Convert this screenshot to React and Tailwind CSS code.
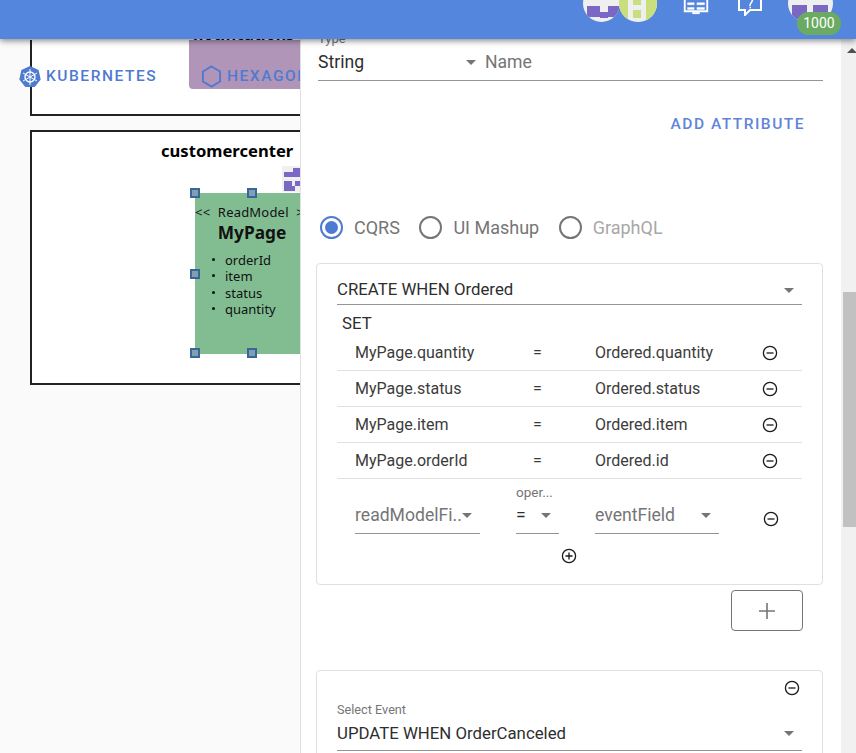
import React from 'react';

const font = { fontFamily: 'Roboto, sans-serif' };

function MinusCircle({ className = '' }) {
  return (
    <svg viewBox="0 0 16 16" className={`w-4 h-4 ${className}`} fill="none" stroke="#1a1a1a" strokeWidth="1.3">
      <circle cx="8" cy="8" r="6.6" />
      <path d="M4.5 8h7" />
    </svg>
  );
}

function Caret({ className = '' }) {
  return <span className={`shrink-0 w-0 h-0 border-x-[5px] border-x-transparent border-t-[5px] border-t-[#757575] ${className}`} />;
}

function Handle({ className }) {
  return <div className={`absolute w-[10px] h-[10px] bg-[#7f9fb5] border-2 border-[#3a6596] ${className}`} />;
}

function Radio({ on, label, muted }) {
  return (
    <div className="flex items-center gap-[11px] h-6">
      <span className={`w-[23px] h-[23px] rounded-full border-2 flex items-center justify-center ${on ? 'border-[#4f7ad2]' : 'border-[#757575]'}`}>
        {on && <span className="w-[13px] h-[13px] rounded-full bg-[#4f7ad2]" />}
      </span>
      <span className={`text-[18px] ${muted ? 'text-[#a8a8a8]' : 'text-[#757575]'}`}>{label}</span>
    </div>
  );
}

const rows = [
  ['MyPage.quantity', 'Ordered.quantity'],
  ['MyPage.status', 'Ordered.status'],
  ['MyPage.item', 'Ordered.item'],
  ['MyPage.orderId', 'Ordered.id'],
];

function MapRow({ left, right }) {
  return (
    <div className="h-9 flex items-center border-b border-[#e0e0e0] text-[#3c3c3c] text-base">
      <span className="w-[170px] pl-[18px]">{left}</span>
      <span className="w-[88px] pl-[26px]">=</span>
      <span className="w-[167px]">{right}</span>
      <MinusCircle />
    </div>
  );
}

function Canvas() {
  return (
    <div className="w-[300px] shrink-0 bg-[#fafafa] pt-[40px] overflow-hidden">
      <div className="ml-[30px] h-[76px] w-[290px] bg-white border-l-2 border-b-2 border-[#222] relative">
        <div className="absolute left-[157px] top-0 w-[133px] h-[49px] bg-[#b095b8] rounded-bl-sm">
          <div className="pl-1 font-bold text-base leading-none text-black -mt-[14px] whitespace-nowrap" style={{ fontFamily: '"Noto Sans", sans-serif' }}>notifications</div>
        </div>
        <div className="absolute left-[-14px] top-[25px] flex items-center gap-[4px]">
          <svg viewBox="0 0 24 24" className="w-6 h-6">
            <path d="M12 1l8.600 4.100 2.100 9.300-6 7.500H7.300l-6-7.500 2.100-9.300z" fill="#4f7ad2" />
            <circle cx="12" cy="12" r="5" fill="none" stroke="#fff" strokeWidth="1.4" />
            <path d="M12 4v16M5 8l14 8M19 8L5 16" stroke="#fff" strokeWidth="1" />
          </svg>
          <span className="text-[#4f7ad2] text-[15.5px] font-medium tracking-[1.55px]">KUBERNETES</span>
        </div>
        <div className="absolute left-[169px] top-[25px] flex items-center gap-[5px] whitespace-nowrap">
          <svg viewBox="0 0 22 24" className="w-[21px] h-[23px]" fill="none" stroke="#4f7ad2" strokeWidth="2">
            <path d="M11 1.500l9 5.200v10.600l-9 5.200-9-5.200V6.700z" />
          </svg>
          <span className="text-[#4f7ad2] text-[15.5px] font-medium tracking-[1.55px]">HEXAGONAL</span>
        </div>
      </div>
      <div className="ml-[30px] mt-[14px] h-[255px] w-[290px] bg-white border-2 border-r-0 border-[#222] relative" style={{ fontFamily: '"Noto Sans", sans-serif' }}>
        <div className="absolute left-[129px] top-[8px] text-[16.6px] font-bold text-black leading-[22px]">customercenter</div>
        <svg viewBox="0 0 18 26" className="absolute left-[250px] top-[34px] w-[18px] h-[26px] bg-[#f0f0f0]" fill="#7b67c4">
          <path d="M11 2h7v4h-7zM2 6h16v5H2zM2 15h8v10H2zM13 15h5v5h-5zM10 20h3v5h-3z" />
        </svg>
        <div className="absolute left-[163px] top-[61px] w-[114px] h-[161px] bg-[#82bd92] text-[#111]">
          <div className="text-[13px] leading-[18px] pt-[10px] whitespace-nowrap text-center [word-spacing:4px] tracking-[0.2px]">&lt;&lt; ReadModel &gt;&gt;</div>
          <div className="text-[17.3px] font-bold text-center leading-[26px] -mt-[1px]">MyPage</div>
          <ul className="mt-[6px] pl-[30px] text-[13px] leading-[16.3px]">
            {['orderId', 'item', 'status', 'quantity'].map(f => (
              <li key={f} className="relative"><span className="absolute -left-[13px] top-[6px] w-[3px] h-[3px] rounded-full bg-[#111]" />{f}</li>
            ))}
          </ul>
          <Handle className="left-[-5px] top-[-5px]" />
          <Handle className="left-[52px] top-[-5px]" />
          <Handle className="left-[-5px] top-[76px]" />
          <Handle className="left-[-5px] top-[155px]" />
          <Handle className="left-[52px] top-[155px]" />
        </div>
      </div>
    </div>
  );
}

function Panel() {
  return (
    <div className="flex-1 min-w-0 bg-white border-l border-[#e0e0e0] pt-[40px] pl-[15px] pr-[18px] overflow-hidden relative">
      <div className="ml-[2px] text-[13px] text-[#757575] leading-none -mt-[8px] h-[12px]">Type</div>
      <div className="ml-[2px] h-[37px] flex items-center border-b border-[#949494] text-[17.6px]">
        <span className="w-[148px] text-[#2e2e2e]">String</span>
        <Caret className="mr-[9px]" />
        <span className="text-[#757575]">Name</span>
      </div>
      <div className="mt-[33px] pr-[18px] text-right text-[#5f85d9] text-[15.5px] font-medium tracking-[1.5px] leading-5">ADD ATTRIBUTE</div>
      <div className="mt-[81px] pl-[4px] flex gap-[19.5px]">
        <Radio on label="CQRS" />
        <Radio label="UI Mashup" />
        <Radio label="GraphQL" muted />
      </div>
      <div className="mt-[24px] h-[322px] border border-[#e0e0e0] rounded pl-5 pr-5 pt-[10px]">
        <div className="h-[31px] pt-[2px] flex items-center justify-between border-b border-[#949494] text-[16.8px] text-[#2e2e2e]">
          <span>CREATE WHEN Ordered</span>
          <Caret className="mr-2" />
        </div>
        <div className="pl-[5px] pt-[8px] text-[16.8px] leading-5 text-[#2e2e2e] h-[30px]">SET</div>
        {rows.map(r => <MapRow key={r[0]} left={r[0]} right={r[1]} />)}
        <div className="flex h-[55px] text-[17.6px] text-[#757575]">
          <div className="ml-[18px] w-[125px] border-b border-[#949494] flex items-center justify-between self-end h-[36px] pr-[8px]">
            <span className="whitespace-nowrap">readModelFi..</span><Caret />
          </div>
          <div className="ml-[36px] w-[43px] self-end relative h-[36px] border-b border-[#949494] flex items-center justify-between pr-[8px]">
            <span className="absolute left-0 -top-[12px] text-[13.5px] leading-none">oper...</span>
            <span className="text-[#2e2e2e]">=</span><Caret />
          </div>
          <div className="ml-[36px] w-[124px] self-end h-[36px] border-b border-[#949494] flex items-center justify-between pr-[8px]">
            <span>eventField</span><Caret />
          </div>
          <MinusCircle className="ml-[44px] self-end mb-[7px]" />
        </div>
        <div className="flex justify-center pt-[14px] pr-[1px]">
          <svg viewBox="0 0 16 16" className="w-4 h-4" fill="none" stroke="#1a1a1a" strokeWidth="1.3">
            <circle cx="8" cy="8" r="6.6" />
            <path d="M4.500 8h7M8 4.500v7" />
          </svg>
        </div>
      </div>
      <div className="flex justify-end pr-[20px] mt-[5px]">
        <div className="w-[72px] h-[41px] border border-[#757575] rounded flex items-center justify-center">
          <svg viewBox="0 0 16 16" className="w-4 h-4" stroke="#757575" strokeWidth="1.6"><path d="M8 0v16M0 8h16" /></svg>
        </div>
      </div>
      <div className="mt-[39px] h-[100px] border border-[#e0e0e0] rounded pl-5 pr-5 relative">
        <MinusCircle className="absolute right-[22px] top-[9px]" />
        <div className="pt-[32px] text-[12.7px] leading-[14px] text-[#757575]">Select Event</div>
        <div className="h-[34px] flex items-center justify-between border-b border-[#949494] text-[16.8px] text-[#2e2e2e]">
          <span>UPDATE WHEN OrderCanceled</span>
          <Caret className="mr-2" />
        </div>
      </div>
    </div>
  );
}

function AppBar() {
  return (
    <div className="absolute top-0 left-0 right-0 h-[39px] bg-[#5586dd] shadow-[0_2px_6px_rgba(0,0,0,0.45)]">
      <div className="absolute inset-0 overflow-hidden">
        <div className="absolute left-[583px] -top-[15px] w-[37px] h-[37px] rounded-full bg-[#efefef] overflow-hidden">
          <div className="absolute left-[4px] top-[21px] w-[13px] h-[11px] bg-[#7b67c4]" />
          <div className="absolute left-[25px] top-[21px] w-[12px] h-[11px] bg-[#7b67c4]" />
          <div className="absolute left-[17px] top-[27px] w-[8px] h-[6px] bg-[#7b67c4]" />
        </div>
        <div className="absolute left-[619px] -top-[15px] w-[38px] h-[37px] rounded-full bg-[#efefef] overflow-hidden">
          <div className="absolute left-0 top-0 w-[9px] h-full bg-[#c9de7c]" />
          <div className="absolute right-0 top-0 w-[11px] h-full bg-[#c9de7c]" />
          <div className="absolute left-[14px] top-0 w-[8px] h-[20px] bg-[#c9de7c]" />
          <div className="absolute left-[14px] top-[25px] w-[8px] h-[8px] bg-[#c9de7c]" />
        </div>
        <svg viewBox="0 0 26 16" className="absolute left-[683px] top-0 w-[26px] h-[15px]" fill="none" stroke="#fff" strokeWidth="2">
          <path d="M1 -2v14h24V-2" />
          <path d="M9 14h8" />
          <path d="M4 3h7v2H4zM14 3h8v2h-8zM4 8h7v2H4zM14 8h8v2h-8z" fill="#fff" strokeWidth="0.5" />
        </svg>
        <svg viewBox="0 0 24 16" className="absolute left-[738px] top-0 w-[24px] h-[16px]" fill="none" stroke="#fff" strokeWidth="2">
          <path d="M1 -2v12h6v5l5-5h11V-2" />
          <path d="M14 -1c1 2 0 3-1 4s-1 2-1 3M11.500 7.500h1.500" strokeWidth="1.6" />
        </svg>
        <div className="absolute left-[788px] -top-[15px] w-[45px] h-[37px] rounded-full bg-[#efefef] overflow-hidden">
          <div className="absolute left-[4px] top-[20px] w-[15px] h-[14px] bg-[#7b67c4]" />
          <div className="absolute left-[25px] top-[20px] w-[15px] h-[10px] bg-[#7b67c4]" />
        </div>
      </div>
      <div className="absolute left-[797px] top-[12px] w-[44px] h-[23px] rounded-full bg-[#6aaa62] text-white text-sm leading-[23px] text-center">1000</div>
    </div>
  );
}

export default function App() {
  return (
    <div className="relative w-[856px] h-[753px] overflow-hidden flex bg-white" style={font}>
      <Canvas />
      <Panel />
      <div className="w-[15px] shrink-0 bg-[#f1f1f1] relative">
        <div className="absolute left-[2px] right-0 top-[292px] h-[235px] bg-[#c1c1c1]" />
        <div className="absolute left-[6px] top-[48px] w-0 h-0 border-x-[5px] border-x-transparent border-b-[5px] border-b-[#505050]" />
      </div>
      <AppBar />
    </div>
  );
}
